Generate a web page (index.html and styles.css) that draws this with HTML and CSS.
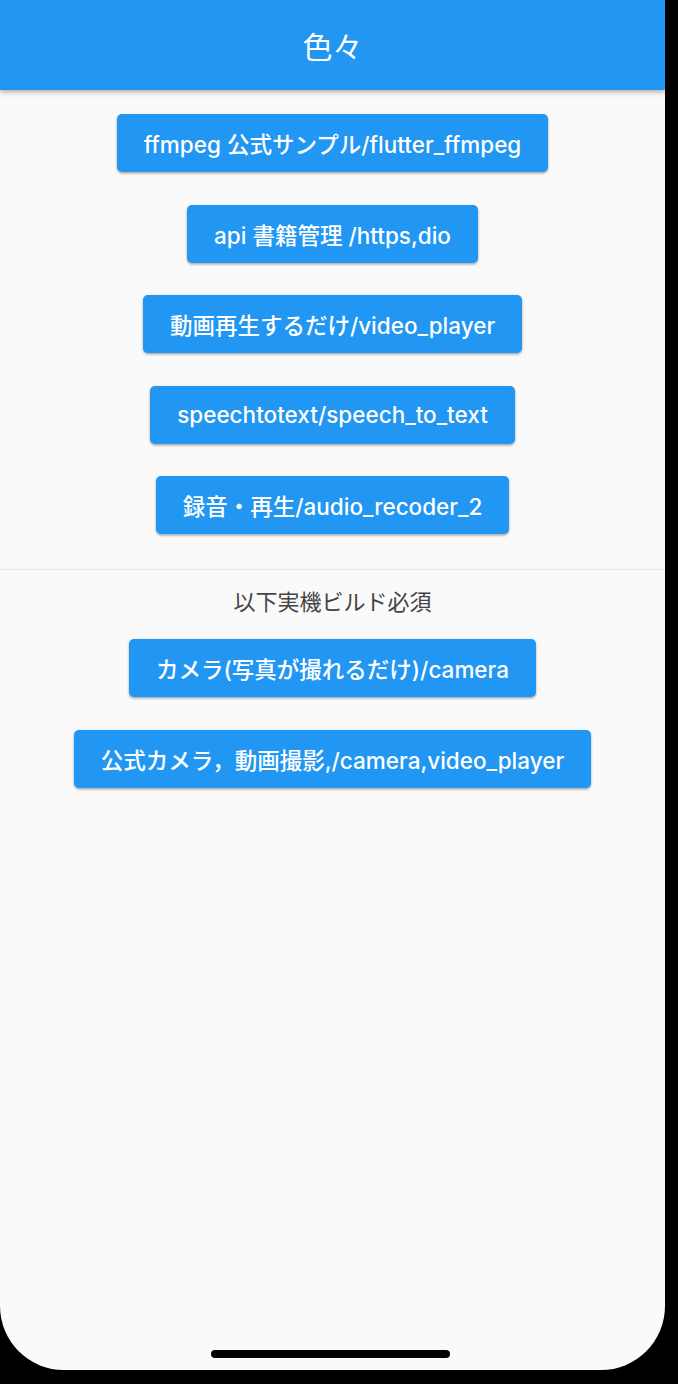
FILE: index.html
```html
<!DOCTYPE html>
<html>

<head>
    <meta charset="UTF-8">
    <title>色々</title>
    <link rel="stylesheet" href="styles.css">
</head>

<body>
    <div class="screen">
        <div class="app-bar">
            <h1>色々</h1>
        </div>
        <div class="menu">
            <button class="menu-button">ffmpeg 公式サンプル/flutter_ffmpeg</button>
            <button class="menu-button">api 書籍管理 /https,dio</button>
            <button class="menu-button">動画再生するだけ/video_player</button>
            <button class="menu-button">speechtotext/speech_to_text</button>
            <button class="menu-button">録音・再生/audio_recoder_2</button>
        </div>
        <div class="divider"></div>
        <div class="section-label">以下実機ビルド必須</div>
        <div class="menu device-menu">
            <button class="menu-button">カメラ(写真が撮れるだけ)/camera</button>
            <button class="menu-button">公式カメラ，動画撮影,/camera,video_player</button>
        </div>
        <div class="home-indicator"></div>
    </div>
</body>

</html>
```

FILE: styles.css
```css
/* 色々 menu screen */
body {
    margin: 0;
    padding: 0;
    background-color: #000;
    font-family: Inter, "Noto Sans CJK JP", sans-serif;
}

.screen {
    position: relative;
    width: 665px;
    height: 1370px;
    background-color: #fafafa;
    border-radius: 0 0 64px 64px;
    overflow: hidden;
    display: flex;
    flex-direction: column;
}

.app-bar {
    height: 90px;
    flex-shrink: 0;
    background-color: #2196f3;
    box-shadow: 0 2px 4px rgba(0, 0, 0, 0.22), 0 4px 6px rgba(0, 0, 0, 0.08);
    display: flex;
    align-items: center;
    justify-content: center;
    position: relative;
    z-index: 1;
}

.app-bar h1 {
    margin: 0;
    color: #fff;
    font-family: "Noto Sans CJK JP", sans-serif;
    font-size: 30px;
    font-weight: 400;
}

.menu {
    display: flex;
    flex-direction: column;
    align-items: center;
    gap: 32.5px;
    padding-top: 24px;
}

.menu-button {
    height: 58px;
    padding: 0 27px;
    background-color: #2196f3;
    color: #fff;
    border: none;
    border-radius: 5px;
    font-family: Inter, "Noto Sans CJK JP", sans-serif;
    font-size: 22.5px;
    font-weight: 500;
    box-shadow: 0 1px 3px rgba(0, 0, 0, 0.25), 0 2px 2px rgba(0, 0, 0, 0.12);
    cursor: pointer;
}

.divider {
    margin-top: 35px;
    height: 1px;
    background-color: #e6e6e6;
}

.section-label {
    margin-top: 18px;
    text-align: center;
    color: #444;
    font-family: "Noto Sans CJK JP", sans-serif;
    font-size: 22px;
    line-height: 24px;
}

.device-menu {
    padding-top: 27px;
}

.home-indicator {
    position: absolute;
    left: 211px;
    bottom: 12px;
    width: 239px;
    height: 8px;
    border-radius: 4px;
    background-color: #000;
}
```
